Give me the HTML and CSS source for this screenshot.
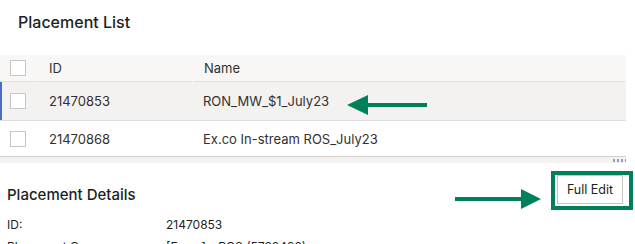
FILE: index.html
```html
<!DOCTYPE html>
<html>
<head>
<meta charset="utf-8">
<link rel="stylesheet" href="styles.css">
</head>
<body>
<section class="list">
  <h2 class="title list-title">Placement List</h2>
  <div class="table">
    <div class="row head">
      <div class="cell check"><span class="box"></span></div>
      <div class="cell id">ID</div>
      <div class="cell name">Name</div>
    </div>
    <div class="row item selected">
      <div class="cell check"><span class="box"></span></div>
      <div class="cell id">21470853</div>
      <div class="cell name">RON_MW_$1_July23</div>
    </div>
    <div class="row item second">
      <div class="cell check"><span class="box"></span></div>
      <div class="cell id">21470868</div>
      <div class="cell name">Ex.co In-stream ROS_July23</div>
    </div>
    <div class="scrollbar"><span class="thumb"></span></div>
  </div>
</section>
<section class="details">
  <div class="details-head">
    <h2 class="title details-title">Placement Details</h2>
    <button class="btn">Full Edit</button>
  </div>
  <div class="field"><span class="label">ID:</span><span class="value">21470853</span></div>
  <div class="field"><span class="label">Placement Group:</span><span class="value">[Ex.co] - ROS (5738498)</span></div>
</section>
<svg class="arrow arrow-left" width="82" height="22" viewBox="0 0 82 22"><path d="M0 11 L21 1 L21 9 L80 9 L80 13 L21 13 L21 21 Z" fill="#00805a"/></svg>
<svg class="arrow arrow-right" width="88" height="22" viewBox="0 0 88 22"><path d="M86 11 L66 1 L66 9 L0 9 L0 13 L66 13 L66 21 Z" fill="#00805a"/></svg>
<div class="highlight"></div>
</body>
</html>
```
FILE: styles.css
```css
html, body {
  margin: 0;
  padding: 0;
  background: #ffffff;
  width: 635px;
  height: 244px;
  overflow: hidden;
  font-family: "Inter", "Liberation Sans", sans-serif;
  color: #323130;
}
.title {
  margin: 0;
  font-weight: 500;
  color: #201f1e;
}
.list-title {
  font-size: 16px;
  line-height: 20px;
  padding: 12px 0 0 18px;
  height: 55px;
  box-sizing: border-box;
}
.table {
  width: 626px;
}
.row {
  display: grid;
  grid-template-columns: 38px 154px 1fr;
  align-items: stretch;
}
.cell {
  display: flex;
  align-items: center;
  font-size: 13px;
}
.cell.id, .cell.name {
  padding-left: 11px;
}
.cell.check {
  padding-left: 10px;
}
.box {
  display: block;
  width: 14px;
  height: 14px;
  border: 1px solid #c8c6c4;
  background: #ffffff;
}
.head {
  background: #f8f7f6;
  height: 27px;
  column-gap: 1px;
  grid-template-columns: 37px 154px 1fr;
}
.head .cell {
  border-bottom: 1px solid #e3e1df;
  font-size: 13px;
}
.head .cell.check { padding-left: 10px; }
.item {
  height: 39px;
  border-bottom: 1px solid #e1dfdd;
  box-sizing: border-box;
}
.selected {
  background: #f3f2f1;
  box-shadow: inset 2px 0 0 #4a6fc0;
}
.second {
  height: 36px;
  border-bottom: 1px solid #d2d0ce;
}
.scrollbar {
  height: 6px;
  background: #f3f2f1;
  display: flex;
  justify-content: flex-end;
  align-items: center;
}
.thumb {
  display: block;
  width: 13px;
  height: 3px;
  background: repeating-linear-gradient(90deg, #8aa0cf 0 2px, transparent 2px 4px);
}
.details {
  padding-left: 7px;
}
.details-head {
  display: flex;
  justify-content: space-between;
  align-items: flex-start;
  height: 51px;
  padding-top: 12px;
  box-sizing: border-box;
}
.details-title {
  font-size: 15px;
  line-height: 20px;
  padding-top: 10px;
}
.btn {
  box-sizing: border-box;
  width: 66px;
  height: 29px;
  margin-right: 12px;
  border: 1px solid #c8c6c4;
  background: #ffffff;
  font-family: "Inter", "Liberation Sans", sans-serif;
  font-size: 12.5px;
  line-height: 27px;
  color: #201f1e;
  padding: 0;
}
.field {
  display: grid;
  grid-template-columns: 159px 1fr;
  font-size: 12px;
  line-height: 22px;
  color: #201f1e;
}
.arrow {
  position: absolute;
}
.arrow-left {
  left: 347px;
  top: 94px;
}
.arrow-right {
  left: 455px;
  top: 188px;
}
.highlight {
  position: absolute;
  left: 551px;
  top: 171px;
  width: 74px;
  height: 31px;
  border: 4px solid #00805a;
}
```
